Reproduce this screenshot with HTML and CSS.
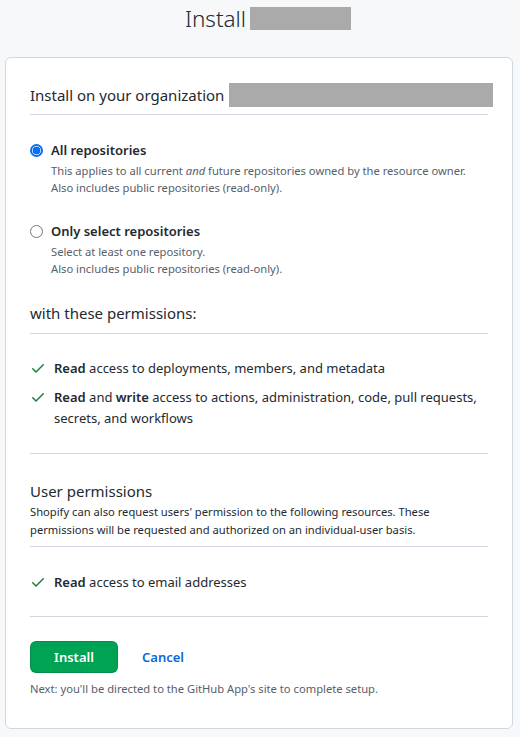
FILE: index.html
```html
<!DOCTYPE html>
<html lang="en">
<head>
<meta charset="utf-8">
<title>Install</title>
<link rel="stylesheet" href="styles.css">
</head>
<body>
<div class="title-row">
  <h1 class="title">Install</h1>
  <span class="redact redact-title"></span>
</div>
<div class="card">
  <div class="org-row">
    <h2 class="h-org">Install on your organization</h2>
    <span class="redact redact-org"></span>
  </div>

  <div class="option option-first">
    <div class="option-label"><span class="radio checked"></span><strong>All repositories</strong></div>
    <p class="option-desc">This applies to all current <em>and</em> future repositories owned by the resource owner.<br>Also includes public repositories (read-only).</p>
  </div>
  <div class="option">
    <div class="option-label"><span class="radio"></span><strong>Only select repositories</strong></div>
    <p class="option-desc">Select at least one repository.<br>Also includes public repositories (read-only).</p>
  </div>

  <h2 class="h-perm">with these permissions:</h2>
  <ul class="perms perms-repo">
    <li><svg class="check" viewBox="0 0 16 16" width="16" height="16"><path d="M13.78 4.22a.75.75 0 0 1 0 1.06l-7.25 7.25a.75.75 0 0 1-1.06 0L2.22 9.28a.75.75 0 0 1 1.06-1.06L6 10.94l6.72-6.72a.75.75 0 0 1 1.06 0Z"/></svg><span class="perm-text"><strong>Read</strong> access to deployments, members, and metadata</span></li>
    <li><svg class="check" viewBox="0 0 16 16" width="16" height="16"><path d="M13.78 4.22a.75.75 0 0 1 0 1.06l-7.25 7.25a.75.75 0 0 1-1.06 0L2.22 9.28a.75.75 0 0 1 1.06-1.06L6 10.94l6.72-6.72a.75.75 0 0 1 1.06 0Z"/></svg><span class="perm-text"><strong>Read</strong> and <strong>write</strong> access to actions, administration, code, pull requests, secrets, and workflows</span></li>
  </ul>

  <div class="user-perm">
    <h2 class="h-user">User permissions</h2>
    <p class="user-desc">Shopify can also request users' permission to the following resources. These permissions will be requested and authorized on an individual-user basis.</p>
  </div>
  <ul class="perms perms-user">
    <li><svg class="check" viewBox="0 0 16 16" width="16" height="16"><path d="M13.78 4.22a.75.75 0 0 1 0 1.06l-7.25 7.25a.75.75 0 0 1-1.06 0L2.22 9.28a.75.75 0 0 1 1.06-1.06L6 10.94l6.72-6.72a.75.75 0 0 1 1.06 0Z"/></svg><span class="perm-text"><strong>Read</strong> access to email addresses</span></li>
  </ul>

  <div class="actions">
    <button class="btn-install" type="button">Install</button>
    <a class="cancel" href="#">Cancel</a>
  </div>
  <p class="note">Next: you'll be directed to the GitHub App's site to complete setup.</p>
</div>
</body>
</html>
```
FILE: styles.css
```css
* { box-sizing: border-box; }
html, body { margin: 0; padding: 0; }
body {
  background: #f6f8fa;
  font-family: "Noto Sans", "Open Sans", sans-serif;
  color: #24292f;
  width: 520px;
}
.title-row {
  display: flex;
  justify-content: center;
  align-items: flex-start;
  gap: 4px;
  padding: 4px 0 0 16px;
  height: 57px;
}
.title {
  margin: 0;
  font-size: 22.5px;
  font-weight: 300;
  line-height: 30px;
}
.redact { display: inline-block; background: #aaaaaa; }
.redact-title { width: 101px; height: 23px; margin-top: 3px; }
.card {
  margin-left: 5px;
  width: 508px;
  background: #fff;
  border: 1px solid #d0d7de;
  border-radius: 6px;
  padding: 25px 24px 30px;
}
.org-row {
  display: flex;
  align-items: center;
  gap: 5px;
  height: 32px;
  padding-bottom: 8px;
  border-bottom: 1px solid #d0d7de;
}
.h-org { margin: 0; font-size: 15px; font-weight: 400; line-height: 24px; white-space: nowrap; }
.redact-org { height: 24px; flex: 1; margin-right: -5px; }
.option { margin-top: 25px; }
.option-label {
  display: flex;
  align-items: center;
  gap: 8px;
  font-size: 13px;
  line-height: 20px;
}
.option-label strong { font-weight: 600; }
.radio {
  width: 13px; height: 13px;
  border-radius: 50%;
  border: 1px solid #767676;
  background: #fff;
  display: inline-block;
  flex: none;
}
.radio.checked {
  border: 2px solid #0a6ef6;
  background: radial-gradient(circle, #0a6ef6 0 3.6px, #fff 4.2px);
}
.option-desc {
  margin: 2px 0 0 21px;
  font-size: 11.2px;
  line-height: 17px;
  color: #57606a;
}
.h-perm {
  margin: 24px 0 0;
  font-size: 15px;
  font-weight: 400;
  line-height: 24px;
  padding-bottom: 8px;
  border-bottom: 1px solid #d0d7de;
}
.perms { list-style: none; margin: 0; padding: 0; border-bottom: 1px solid #d0d7de; }
.perms li {
  display: flex;
  align-items: flex-start;
  gap: 8px;
  font-size: 13px;
  line-height: 21px;
}
.perm-text { display: block; }
.perms li + li { margin-top: 8px; }
.perms strong { font-weight: 600; }
.check { fill: #1a7f37; flex: none; margin-top: 2px; }
.perms-repo { padding-top: 24px; padding-bottom: 24px; }
.user-perm { padding-top: 25px; padding-bottom: 7px; border-bottom: 1px solid #d0d7de; }
.h-user { margin: 0; font-size: 15px; font-weight: 400; line-height: 24px; }
.user-desc { margin: 0; font-size: 11.2px; line-height: 18px; color: #24292f; }
.perms-user { padding-top: 25px; padding-bottom: 23px; }
.actions { display: flex; align-items: center; gap: 24px; margin-top: 24px; }
.btn-install {
  width: 88px; height: 32px;
  background: #00a254;
  color: #fff;
  border: 1px solid rgba(27,31,36,0.15);
  border-radius: 6px;
  font-family: inherit;
  font-size: 13px;
  font-weight: 600;
}
.cancel { color: #0969da; font-size: 13px; font-weight: 600; text-decoration: none; }
.note { margin: 7px 0 0; font-size: 11.2px; line-height: 18px; color: #57606a; }
```
